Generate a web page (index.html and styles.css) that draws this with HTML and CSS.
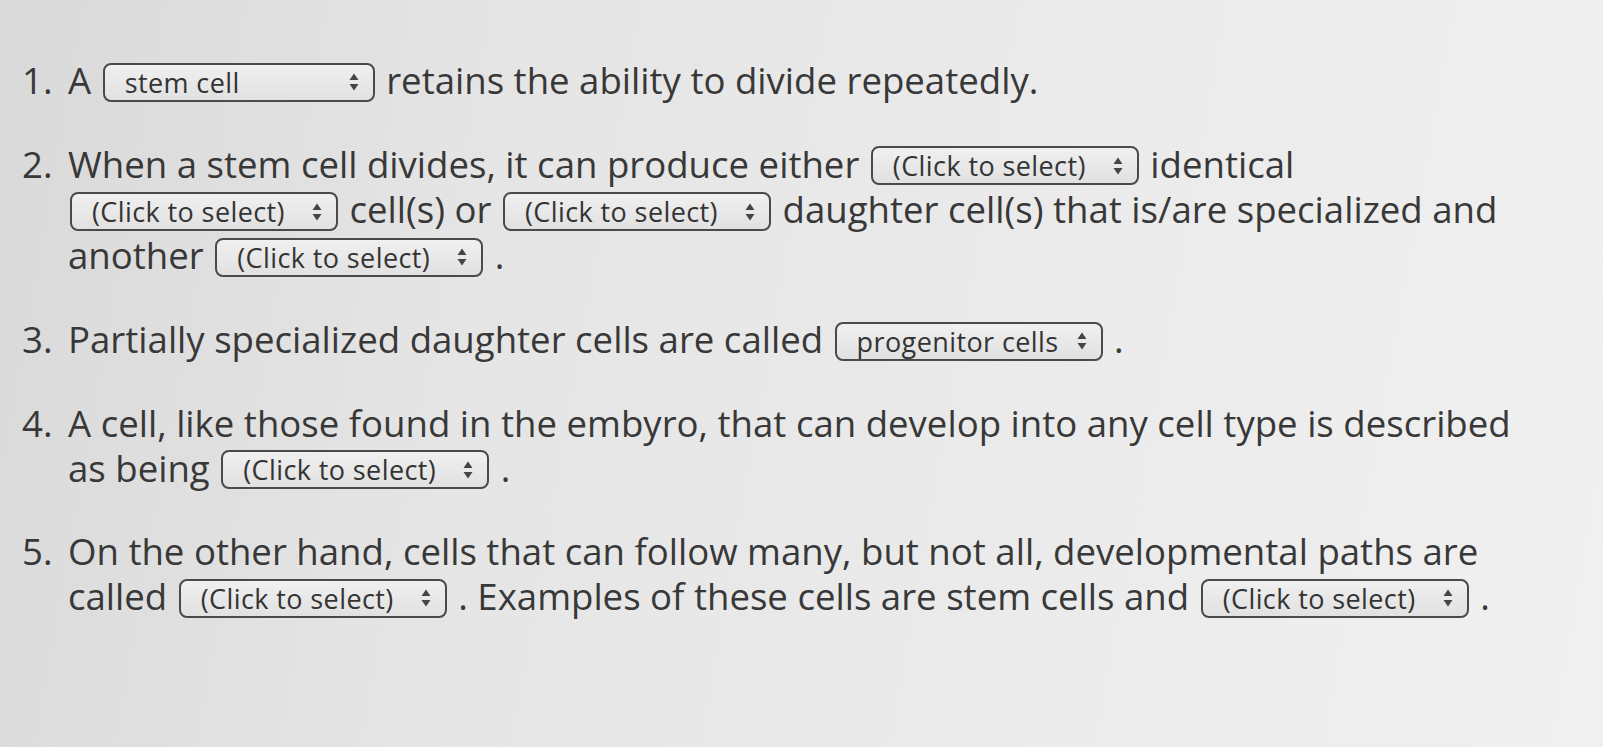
FILE: index.html
```html
<!DOCTYPE html>
<html>
<head>
<meta charset="utf-8">
<link rel="stylesheet" href="styles.css">
</head>
<body>
<ol class="questions">
  <li class="q"><span class="num">1.</span><p class="text">A <span class="sel wide"><span class="val">stem cell</span><svg class="arr" viewBox="0 0 10 20"><path d="M5 1.5 L9.5 8 H0.5 Z M5 18.5 L9.5 12 H0.5 Z"/></svg></span> retains the ability to divide repeatedly.</p></li>
  <li class="q"><span class="num">2.</span><p class="text">When a stem cell divides, it can produce either <span class="sel"><span class="val">(Click to select)</span><svg class="arr" viewBox="0 0 10 20"><path d="M5 1.5 L9.5 8 H0.5 Z M5 18.5 L9.5 12 H0.5 Z"/></svg></span> identical <span class="sel"><span class="val">(Click to select)</span><svg class="arr" viewBox="0 0 10 20"><path d="M5 1.5 L9.5 8 H0.5 Z M5 18.5 L9.5 12 H0.5 Z"/></svg></span> cell(s) or <span class="sel"><span class="val">(Click to select)</span><svg class="arr" viewBox="0 0 10 20"><path d="M5 1.5 L9.5 8 H0.5 Z M5 18.5 L9.5 12 H0.5 Z"/></svg></span> daughter cell(s) that is/are specialized and another <span class="sel"><span class="val">(Click to select)</span><svg class="arr" viewBox="0 0 10 20"><path d="M5 1.5 L9.5 8 H0.5 Z M5 18.5 L9.5 12 H0.5 Z"/></svg></span> .</p></li>
  <li class="q"><span class="num">3.</span><p class="text">Partially specialized daughter cells are called <span class="sel"><span class="val">progenitor cells</span><svg class="arr" viewBox="0 0 10 20"><path d="M5 1.5 L9.5 8 H0.5 Z M5 18.5 L9.5 12 H0.5 Z"/></svg></span> .</p></li>
  <li class="q"><span class="num">4.</span><p class="text">A cell, like those found in the embyro, that can develop into any cell type is described as being <span class="sel"><span class="val">(Click to select)</span><svg class="arr" viewBox="0 0 10 20"><path d="M5 1.5 L9.5 8 H0.5 Z M5 18.5 L9.5 12 H0.5 Z"/></svg></span> .</p></li>
  <li class="q"><span class="num">5.</span><p class="text">On the other hand, cells that can follow many, but not all, developmental paths are called <span class="sel"><span class="val">(Click to select)</span><svg class="arr" viewBox="0 0 10 20"><path d="M5 1.5 L9.5 8 H0.5 Z M5 18.5 L9.5 12 H0.5 Z"/></svg></span> . Examples of these cells are stem cells and <span class="sel"><span class="val">(Click to select)</span><svg class="arr" viewBox="0 0 10 20"><path d="M5 1.5 L9.5 8 H0.5 Z M5 18.5 L9.5 12 H0.5 Z"/></svg></span> .</p></li>
</ol>
</body>
</html>
```
FILE: styles.css
```css
html, body {
  margin: 0;
  padding: 0;
}
body {
  width: 1603px;
  height: 747px;
  overflow: hidden;
  background: linear-gradient(100deg, #d9d9d9 0%, #e5e5e5 30%, #ebebeb 65%, #f0f0f0 100%);
  font-family: "Open Sans", "Noto Sans", sans-serif;
  color: #383838;
}
.questions {
  list-style: none;
  margin: 0;
  padding: 58px 0 0 22px;
  display: flex;
  flex-direction: column;
  gap: 38px;
}
.q {
  display: flex;
  align-items: flex-start;
}
.num {
  width: 46px;
  flex: none;
  font-size: 36.6px;
  line-height: 45px;
}
.text {
  margin: 0;
  width: 1448px;
  font-size: 36.6px;
  line-height: 45px;
}
.sel {
  display: inline-flex;
  flex: none;
  align-items: center;
  justify-content: space-between;
  box-sizing: border-box;
  width: 268px;
  height: 39px;
  padding: 0 14px 0 20px;
  margin: 0 2px;
  border: 2px solid #4a4a4a;
  border-radius: 8px;
  background: linear-gradient(#f0f0f0, #e1e1e1);
  vertical-align: middle;
  font-size: 27px;
  letter-spacing: 0.4px;
  line-height: 1;
  color: #343434;
  position: relative;
  top: -2px;
}
.sel.wide {
  width: 272px;
}
.arr {
  width: 10px;
  height: 20px;
  fill: #454545;
}
```
